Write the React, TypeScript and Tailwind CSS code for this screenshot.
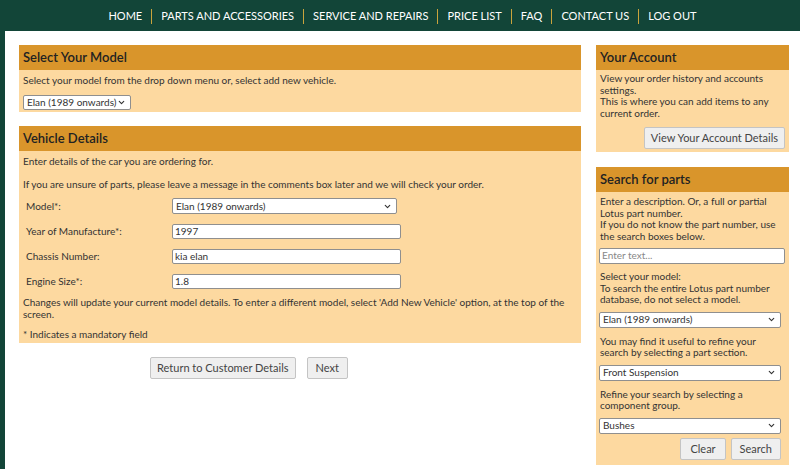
import { ChevronDown } from 'lucide-react';

const navItems = ['HOME', 'PARTS AND ACCESSORIES', 'SERVICE AND REPAIRS', 'PRICE LIST', 'FAQ', 'CONTACT US', 'LOG OUT'];

function Select({ value, className }: { value: string; className: string }) {
    return (
        <div className={`relative bg-white border border-[#8f8f8f] rounded-[2px] flex items-center text-[10px] text-[#333] pl-[3px] ${className}`}>
            <span>{value}</span>
            <ChevronDown className="absolute right-[4px] w-[9px] h-[9px]" strokeWidth={3} />
        </div>
    );
}

function Input({ value, className, placeholder }: { value?: string; className: string; placeholder?: string }) {
    return (
        <div className={`bg-white border border-[#8f8f8f] rounded-[2px] flex items-center text-[10px] pl-[2px] ${className}`}>
            {value ? <span className="text-[#333]">{value}</span> : <span className="text-[#888]">{placeholder}</span>}
        </div>
    );
}

function Button({ children, className = '' }: { children: React.ReactNode; className?: string }) {
    return (
        <div className={`h-[22px] flex items-center bg-[#efefef] border border-[#c4c4c4] rounded-[2px] text-[11px] text-[#444] ${className}`}>
            {children}
        </div>
    );
}

function PanelHeader({ title }: { title: string }) {
    return (
        <div className="h-[25px] bg-[#d9952b] flex items-center px-[4px] text-[13px] font-semibold text-[#222]">
            {title}
        </div>
    );
}

export default function App() {
    return (
        <div className="w-[800px] h-[469px] bg-[#124538] overflow-hidden text-[#333]" style={{ fontFamily: 'Lato, "Open Sans", sans-serif' }}>
            <nav className="h-[31px] flex justify-center items-center pt-[1px] pl-[5px]">
                {navItems.map((item, i) => (
                    <div key={item} className="flex items-center">
                        {i > 0 && <span className="w-[1px] h-[15px] bg-[#c9a43c] mx-[9px]" />}
                        <span className="text-[11px] text-white">{item}</span>
                    </div>
                ))}
            </nav>

            <div className="ml-[5px] h-[438px] bg-white flex gap-[15px] pl-[14px] pt-[14px] pr-[11px]">
                {/* left column */}
                <div className="w-[562px] flex flex-col">
                    <div>
                        <PanelHeader title="Select Your Model" />
                        <div className="bg-[#fdd9a0] h-[42px] px-[4px] pt-[3px] text-[10px]">
                            <p>Select your model from the drop down menu or, select add new vehicle.</p>
                            <Select value="Elan (1989 onwards)" className="w-fit pr-[14px] h-[15px] mt-[7px]" />
                        </div>
                    </div>

                    <div className="mt-[14px]">
                        <PanelHeader title="Vehicle Details" />
                        <div className="bg-[#fdd9a0] h-[192px] px-[4px] pt-[3px] text-[10px]">
                            <p>Enter details of the car you are ordering for.</p>
                            <p className="mt-[8px]">If you are unsure of parts, please leave a message in the comments box later and we will check your order.</p>
                            <div className="mt-[6px] flex flex-col gap-[10px]">
                                <div className="flex items-center">
                                    <span className="w-[149px] pl-[3px]">Model*:</span>
                                    <Select value="Elan (1989 onwards)" className="w-[225px] h-[16px]" />
                                </div>
                                <div className="flex items-center">
                                    <span className="w-[149px] pl-[3px]">Year of Manufacture*:</span>
                                    <Input value="1997" className="w-[229px] h-[15px]" />
                                </div>
                                <div className="flex items-center">
                                    <span className="w-[149px] pl-[3px]">Chassis Number:</span>
                                    <Input value="kia elan" className="w-[229px] h-[15px]" />
                                </div>
                                <div className="flex items-center">
                                    <span className="w-[149px] pl-[3px]">Engine Size*:</span>
                                    <Input value="1.8" className="w-[229px] h-[15px]" />
                                </div>
                            </div>
                            <p className="mt-[7px] leading-[12px]">Changes will update your current model details. To enter a different model, select 'Add New Vehicle' option, at the top of the screen.</p>
                            <p className="mt-[7px]">* Indicates a mandatory field</p>
                        </div>
                    </div>

                    <div className="mt-[14px] flex gap-[11px] pl-[131px]">
                        <Button className="px-[6px]">Return to Customer Details</Button>
                        <Button className="px-[8px]">Next</Button>
                    </div>
                </div>

                {/* right column */}
                <div className="w-[193px] flex flex-col">
                    <div>
                        <PanelHeader title="Your Account" />
                        <div className="bg-[#fdd9a0] h-[82px] px-[4px] pt-[3px] text-[10px] leading-[11.5px] flex flex-col">
                            <p>View your order history and accounts settings.</p>
                            <p>This is where you can add items to any current order.</p>
                            <div className="flex justify-end mt-[8px]">
                                <Button className="px-[6px]">View Your Account Details</Button>
                            </div>
                        </div>
                    </div>

                    <div className="mt-[15px]">
                        <PanelHeader title="Search for parts" />
                        <div className="bg-[#fdd9a0] h-[273px] px-[3px] pt-[4px] text-[10px] leading-[11.5px]">
                            <p className="px-[1px]">Enter a description. Or, a full or partial Lotus part number.</p>
                            <p className="px-[1px]">If you do not know the part number, use the search boxes below.</p>
                            <Input placeholder="Enter text..." className="w-[186px] h-[16px] mt-[6px]" />
                            <p className="px-[1px] mt-[7px]">Select your model:</p>
                            <p className="px-[1px]">To search the entire Lotus part number database, do not select a model.</p>
                            <Select value="Elan (1989 onwards)" className="w-[182px] h-[16px] mt-[6px]" />
                            <p className="px-[1px] mt-[8px]">You may find it useful to refine your search by selecting a part section.</p>
                            <Select value="Front Suspension" className="w-[182px] h-[16px] mt-[6px]" />
                            <p className="px-[1px] mt-[8px]">Refine your search by selecting a component group.</p>
                            <Select value="Bushes" className="w-[182px] h-[16px] mt-[6px]" />
                            <div className="flex justify-end gap-[5px] mt-[4px] pr-[5px]">
                                <Button className="px-[9px]">Clear</Button>
                                <Button className="px-[8px]">Search</Button>
                            </div>
                        </div>
                    </div>
                </div>
            </div>
        </div>
    );
}
